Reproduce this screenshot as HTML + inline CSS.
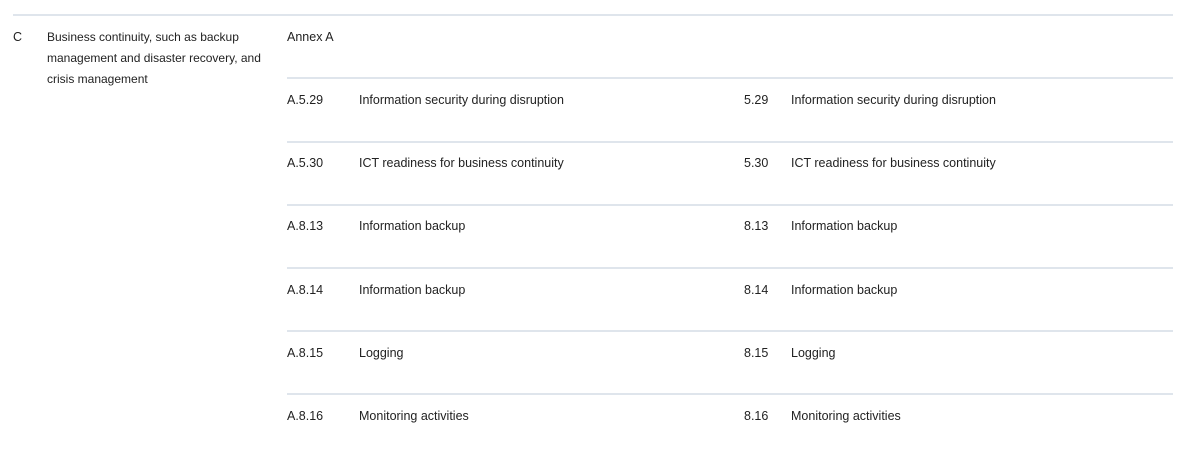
<!DOCTYPE html>
<html><head><style>
body{margin:0;width:1189px;height:451px;background:#fff;font-family:"Liberation Sans",sans-serif;font-size:12.5px;color:#222;position:relative;overflow:hidden}
.l{position:absolute;height:1.5px;background:#dfe5ec}
.t{position:absolute;white-space:nowrap;line-height:21px}
</style></head><body>
<div class="l" style="left:13px;width:1160px;top:14px"></div>
<div class="t" style="left:13px;top:27px">C</div>
<div class="t" style="left:47px;top:27px;font-size:12px">Business continuity, such as backup<br>management and disaster recovery, and<br>crisis management</div>
<div class="t" style="left:287px;top:27px">Annex A</div>

<div class="l" style="left:287px;width:886px;top:77px"></div>
<div class="t" style="left:287px;top:90px">A.5.29</div><div class="t" style="left:359px;top:90px">Information security during disruption</div>
<div class="t" style="left:744px;top:90px">5.29</div><div class="t" style="left:791px;top:90px">Information security during disruption</div>

<div class="l" style="left:287px;width:886px;top:141px"></div>
<div class="t" style="left:287px;top:153px">A.5.30</div><div class="t" style="left:359px;top:153px">ICT readiness for business continuity</div>
<div class="t" style="left:744px;top:153px">5.30</div><div class="t" style="left:791px;top:153px">ICT readiness for business continuity</div>

<div class="l" style="left:287px;width:886px;top:204px"></div>
<div class="t" style="left:287px;top:216px">A.8.13</div><div class="t" style="left:359px;top:216px">Information backup</div>
<div class="t" style="left:744px;top:216px">8.13</div><div class="t" style="left:791px;top:216px">Information backup</div>

<div class="l" style="left:287px;width:886px;top:267px"></div>
<div class="t" style="left:287px;top:280px">A.8.14</div><div class="t" style="left:359px;top:280px">Information backup</div>
<div class="t" style="left:744px;top:280px">8.14</div><div class="t" style="left:791px;top:280px">Information backup</div>

<div class="l" style="left:287px;width:886px;top:330px"></div>
<div class="t" style="left:287px;top:343px">A.8.15</div><div class="t" style="left:359px;top:343px">Logging</div>
<div class="t" style="left:744px;top:343px">8.15</div><div class="t" style="left:791px;top:343px">Logging</div>

<div class="l" style="left:287px;width:886px;top:393px"></div>
<div class="t" style="left:287px;top:406px">A.8.16</div><div class="t" style="left:359px;top:406px">Monitoring activities</div>
<div class="t" style="left:744px;top:406px">8.16</div><div class="t" style="left:791px;top:406px">Monitoring activities</div>
</body></html>
